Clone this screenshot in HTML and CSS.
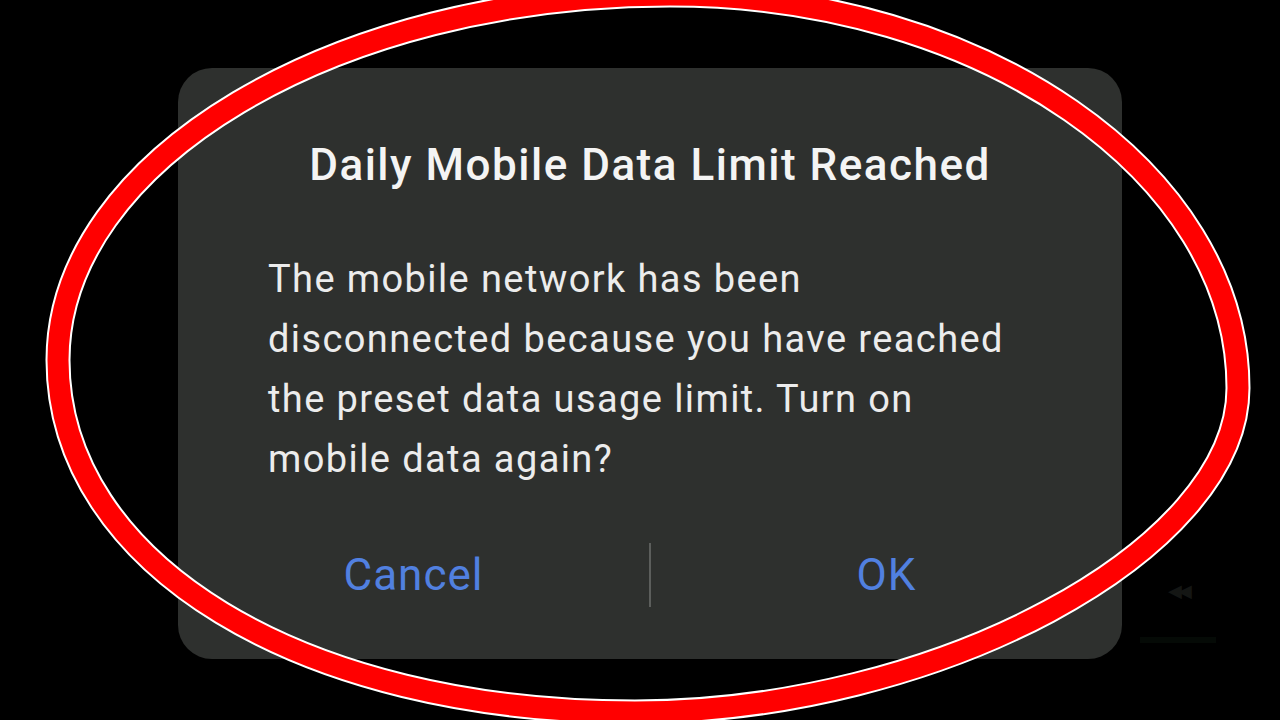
FILE: index.html
```html
<!DOCTYPE html>
<html lang="en">
<head>
<meta charset="utf-8">
<title>Daily Mobile Data Limit Reached</title>
<link rel="stylesheet" href="styles.css">
</head>
<body>
<div class="screen">
  <div class="dialog">
    <h1 class="title">Daily Mobile Data Limit Reached</h1>
    <p class="message">The mobile network has been disconnected because you have reached the preset data usage limit. Turn on mobile data again?</p>
    <div class="actions">
      <button class="btn">Cancel</button>
      <span class="divider"></span>
      <button class="btn">OK</button>
    </div>
  </div>
  <div class="ghost">
    <span class="ghost-icon">&#9664;&#9664;</span>
    <span class="ghost-line"></span>
  </div>
  <svg class="ring" width="1280" height="720" viewBox="0 0 1280 720" aria-hidden="true">
    <path class="ring-glow" d="M 58 360 C 58 160, 335 -5, 670 -5 C 981 -5, 1238 172, 1238 388 C 1238 551, 935 712, 635 712 C 302 712, 58 565, 58 360 Z"/>
    <path class="ring-red" d="M 58 360 C 58 160, 335 -5, 670 -5 C 981 -5, 1238 172, 1238 388 C 1238 551, 935 712, 635 712 C 302 712, 58 565, 58 360 Z"/>
  </svg>
</div>
</body>
</html>
```
FILE: styles.css
```css
* { box-sizing: border-box; }
html, body {
  margin: 0;
  padding: 0;
  background: #000;
}
.screen {
  position: relative;
  width: 1280px;
  height: 720px;
  overflow: hidden;
  background: #000;
  padding: 68px 0 0 178px;
  font-family: Roboto, "Liberation Sans", sans-serif;
}
.dialog {
  width: 944px;
  height: 591px;
  background: #2e302e;
  border-radius: 34px;
  padding: 67px 90px 52px 90px;
  display: flex;
  flex-direction: column;
}
.title {
  margin: 0;
  font-size: 44px;
  line-height: 60px;
  font-weight: 500;
  letter-spacing: 1.5px;
  color: #f4f4f4;
  text-align: center;
  white-space: nowrap;
}
.message {
  margin: 54px 0 0 0;
  font-size: 38px;
  line-height: 60px;
  font-weight: 400;
  letter-spacing: 1.4px;
  color: #ececec;
  height: 240px;
}
.actions {
  margin: 54px -90px 0 -90px;
  height: 64px;
  display: flex;
  align-items: center;
}
.btn {
  flex: 1;
  background: none;
  border: 0;
  padding: 0;
  font-family: Roboto, "Liberation Sans", sans-serif;
  font-size: 44px;
  line-height: 64px;
  font-weight: 400;
  letter-spacing: 1px;
  color: #5180e0;
}
.divider {
  width: 2px;
  height: 64px;
  background: #5c5e5c;
}
.ghost {
  position: absolute;
  left: 1138px;
  top: 580px;
  width: 80px;
  display: flex;
  flex-direction: column;
  align-items: center;
  gap: 36px;
}
.ghost-icon {
  font-size: 18px;
  letter-spacing: -4px;
  color: #141614;
}
.ghost-line {
  width: 76px;
  height: 6px;
  background: #050a06;
}
.ring {
  position: absolute;
  left: 0;
  top: 0;
}
.ring-glow {
  fill: none;
  stroke: #ffffff;
  stroke-width: 25;
}
.ring-red {
  fill: none;
  stroke: #ff0000;
  stroke-width: 21;
}
```
